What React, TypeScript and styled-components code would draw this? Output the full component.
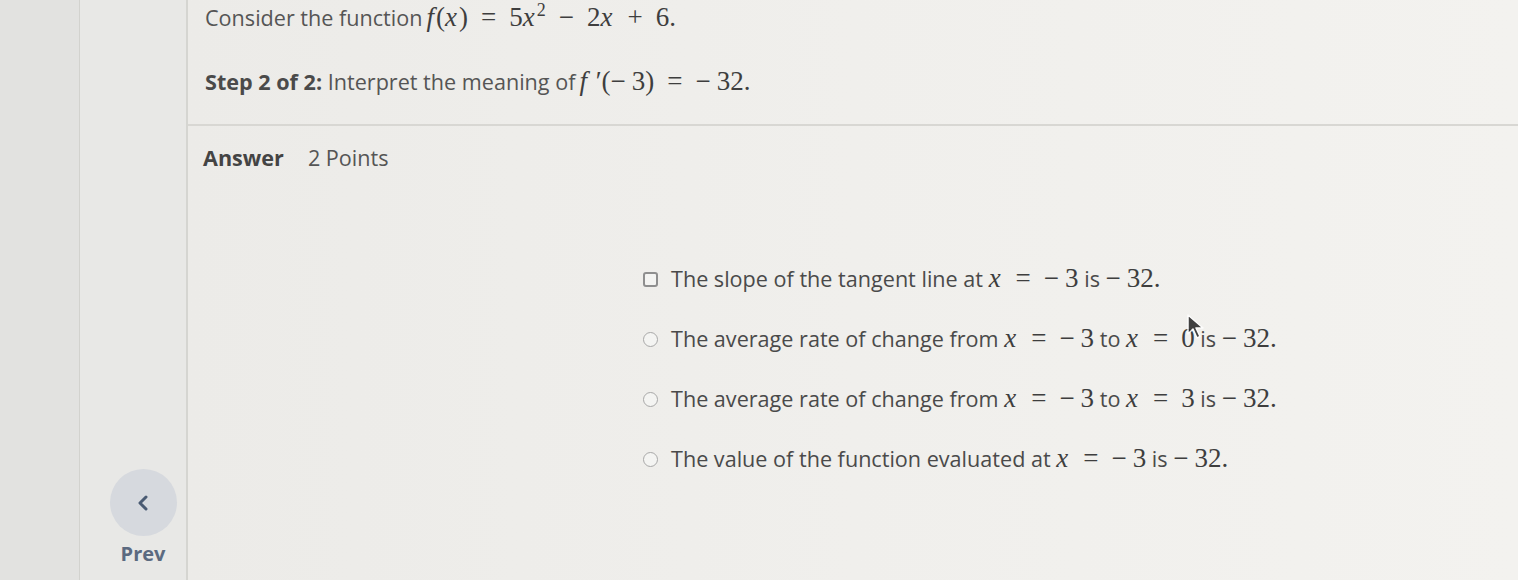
import React from "react"
import styled, { createGlobalStyle } from "styled-components"

const GlobalStyle = createGlobalStyle`
  html, body {
    margin: 0;
    padding: 0;
    background: #e3e3e1;
  }
  * {
    box-sizing: border-box;
  }
`

const StyledPage = styled.div`
  display: flex;
  height: 580px;
  overflow: hidden;
  font-family: "Open Sans", "Noto Sans", sans-serif;
  color: #4d4d4d;
`

const StyledStrip = styled.div`
  width: 80px;
  flex-shrink: 0;
  background: #e2e2e0;
  border-right: 1px solid #d2d2ce;
`

const StyledSidebar = styled.div`
  width: 108px;
  flex-shrink: 0;
  background: #e8e8e6;
  border-right: 2px solid #d5d5d1;
  display: flex;
  flex-direction: column;
  align-items: center;
  justify-content: flex-end;
  padding: 0 0 12px 20px;
`

const StyledPrevButton = styled.div`
  width: 67px;
  height: 67px;
  border-radius: 50%;
  background: #d6d9de;
  display: flex;
  align-items: center;
  justify-content: center;
`

const StyledPrevLabel = styled.div`
  margin-top: 4px;
  font-size: 20px;
  font-weight: 700;
  color: #5b6a80;
  line-height: 28px;
`

const StyledMain = styled.div`
  position: relative;
  flex: 1;
  background: linear-gradient(90deg, #ecebe8 0%, #f0efec 50%, #f3f2ef 100%);
`

const StyledQuestion = styled.div`
  padding: 4px 17px 28px;
  display: flex;
  flex-direction: column;
  gap: 36px;
  border-bottom: 2px solid #d8d7d3;
`

const StyledLine = styled.div`
  font-size: 21.6px;
  line-height: 28px;
  color: #555;
  white-space: nowrap;
  b {
    font-weight: 700;
    color: #4a4a4a;
  }
`

const MathSpan = styled.span`
  font-family: "Liberation Serif", "Times New Roman", serif;
  font-size: 27px;
  line-height: 1;
  color: #3e3e3e;
  margin-left: 4px;
  sup {
    font-size: 18px;
    vertical-align: 10px;
    line-height: 0;
  }
`

const Var = styled.i`
  font-family: "Liberation Serif", "Times New Roman", serif;
  font-size: 27px;
  line-height: 1;
  font-style: italic;
  color: #3e3e3e;
  padding-right: 2px;
`

const Op = styled.span`
  font-family: "Liberation Serif", "Times New Roman", serif;
  font-size: 27px;
  line-height: 1;
  margin: 0 13px;
  color: #3e3e3e;
`

const Num = styled.span`
  font-family: "Liberation Serif", "Times New Roman", serif;
  font-size: 27px;
  line-height: 1;
  color: #3e3e3e;
`

const Neg = styled.span`
  margin-right: 6px;
`

const StyledAnswerRow = styled.div`
  margin-top: 18px;
  padding-left: 15px;
  display: flex;
  gap: 24px;
  font-size: 21.6px;
  line-height: 28px;
  color: #555;
  b {
    font-weight: 700;
    color: #444;
  }
`

const StyledOptions = styled.div`
  margin: 93px 0 0 455px;
  display: flex;
  flex-direction: column;
  gap: 32px;
`

const StyledOption = styled.div`
  display: flex;
  align-items: center;
  gap: 13px;
  font-size: 21.6px;
  line-height: 28px;
  color: #4a4a4a;
  white-space: nowrap;
`

const StyledMark = styled.span<{ $kind: string }>`
  width: 15px;
  height: 15px;
  flex-shrink: 0;
  border: ${(p) => (p.$kind === "check" ? "2px solid #8f8f8f" : "1.5px solid #a8a8a8")};
  border-radius: ${(p) => (p.$kind === "check" ? "3px" : "50%")};
  background: #f4f4f2;
`

const StyledCursor = styled.svg`
  position: absolute;
  left: 997px;
  top: 313px;
  opacity: 0.85;
`

const negNum = (n: string) => (
  <Num>
    <Neg>−</Neg>
    {n}
  </Num>
)

const options = [
  {
    kind: "check",
    text: (
      <>
        The slope of the tangent line at <Var>x</Var>
        <Op>=</Op>
        {negNum("3")} is {negNum("32.")}
      </>
    ),
  },
  {
    kind: "radio",
    text: (
      <>
        The average rate of change from <Var>x</Var>
        <Op>=</Op>
        {negNum("3")} to <Var>x</Var>
        <Op>=</Op>
        <Num>0</Num> is {negNum("32.")}
      </>
    ),
  },
  {
    kind: "radio",
    text: (
      <>
        The average rate of change from <Var>x</Var>
        <Op>=</Op>
        {negNum("3")} to <Var>x</Var>
        <Op>=</Op>
        <Num>3</Num> is {negNum("32.")}
      </>
    ),
  },
  {
    kind: "radio",
    text: (
      <>
        The value of the function evaluated at <Var>x</Var>
        <Op>=</Op>
        {negNum("3")} is {negNum("32.")}
      </>
    ),
  },
]

export default function App() {
  return (
    <>
      <GlobalStyle />
      <StyledPage>
        <StyledStrip />
        <StyledSidebar>
          <StyledPrevButton>
            <svg width="16" height="18" viewBox="0 0 16 18">
              <path d="M11 3 L5 9 L11 15" fill="none" stroke="#4a5b73" strokeWidth="3" strokeLinecap="round" strokeLinejoin="round" />
            </svg>
          </StyledPrevButton>
          <StyledPrevLabel>Prev</StyledPrevLabel>
        </StyledSidebar>
        <StyledMain>
          <StyledQuestion>
            <StyledLine>
              Consider the function
              <MathSpan>
                <Var>f</Var>(<Var>x</Var>)<Op>=</Op>5<Var>x</Var>
                <sup>2</sup>
                <Op>−</Op>2<Var>x</Var>
                <Op>+</Op>6.
              </MathSpan>
            </StyledLine>
            <StyledLine>
              <b>Step 2 of 2:</b> Interpret the meaning of
              <MathSpan>
                <Var>f</Var> ′(<Neg>−</Neg>3)<Op>=</Op>
                <Neg>−</Neg>32.
              </MathSpan>
            </StyledLine>
          </StyledQuestion>
          <StyledAnswerRow>
            <b>Answer</b>
            <span>2 Points</span>
          </StyledAnswerRow>
          <StyledOptions>
            {options.map((o, i) => (
              <StyledOption key={i}>
                <StyledMark $kind={o.kind} />
                <span>{o.text}</span>
              </StyledOption>
            ))}
          </StyledOptions>
          <StyledCursor width="24" height="28" viewBox="0 0 24 28">
            <path d="M3 2 L3 21 L8 16 L12 25 L15 23.5 L11 15 L18 15 Z" fill="#222" stroke="#fff" strokeWidth="1.5" strokeLinejoin="round" />
          </StyledCursor>
        </StyledMain>
      </StyledPage>
    </>
  )
}
